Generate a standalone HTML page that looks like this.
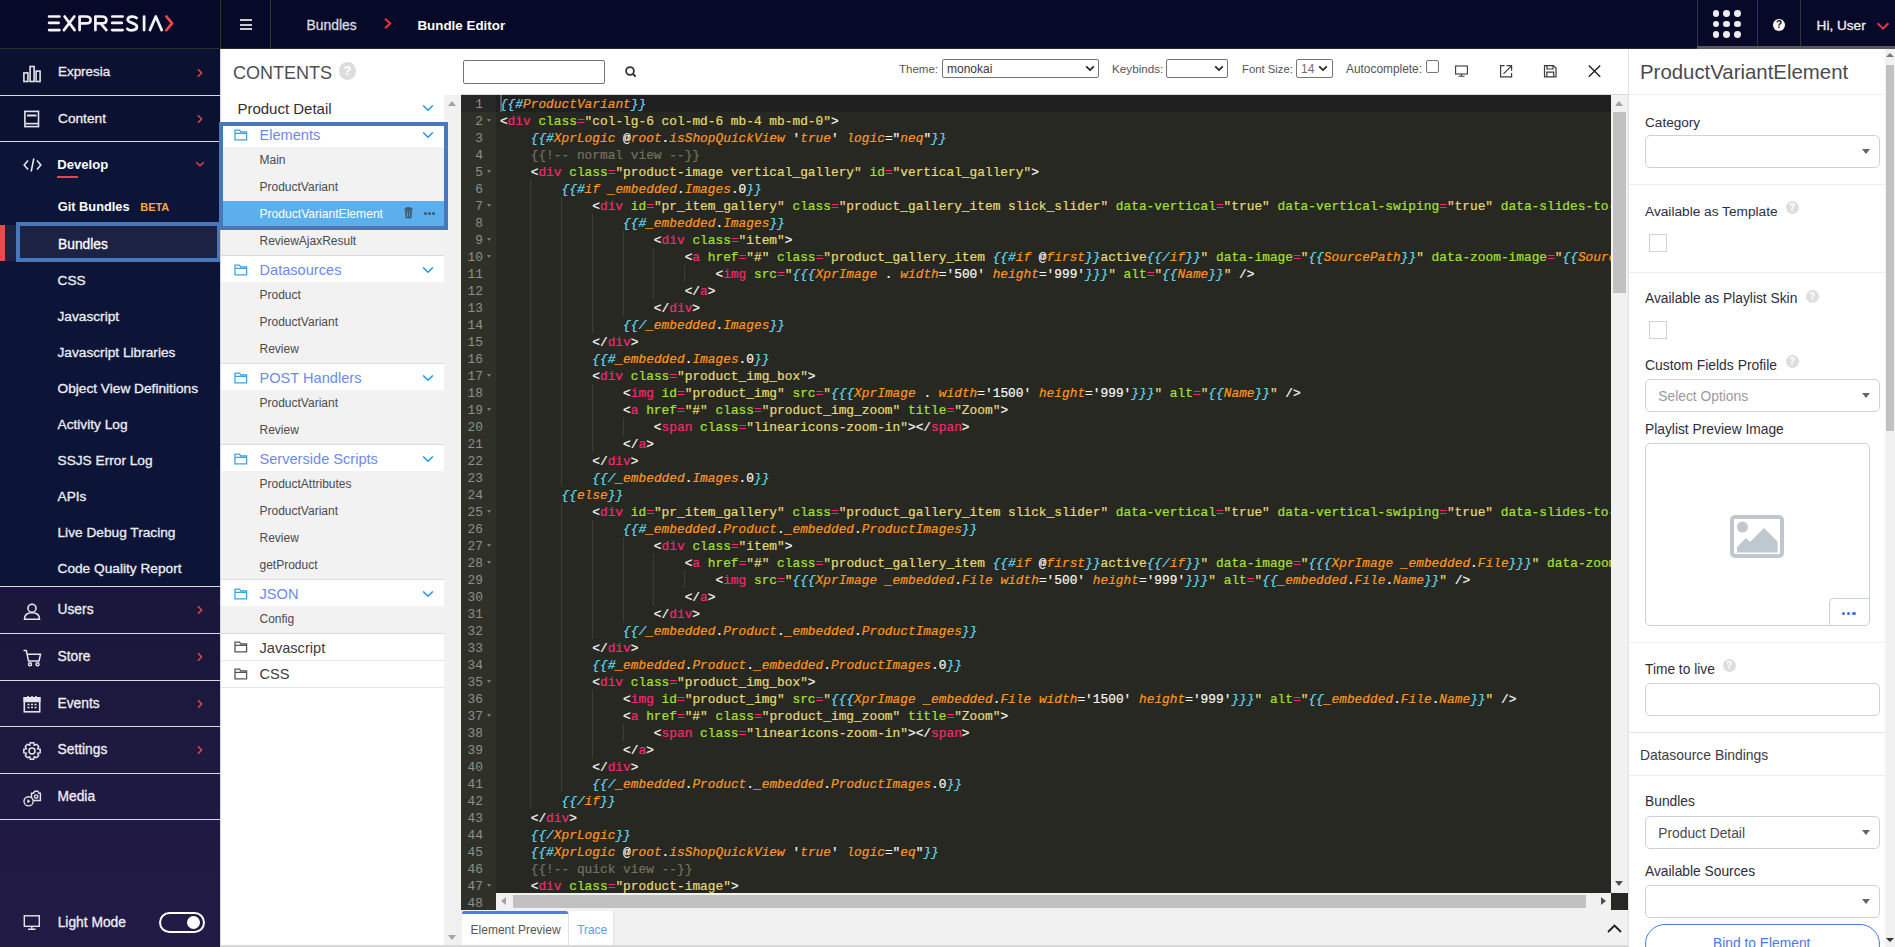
<!DOCTYPE html>
<html><head><meta charset="utf-8">
<style>
*{box-sizing:border-box;margin:0;padding:0}
html,body{width:1895px;height:947px;overflow:hidden;background:#fff;font-family:"Liberation Sans",sans-serif}
.a{position:absolute}
.t{position:absolute;white-space:nowrap;line-height:1}
/* header */
#hdr{left:0;top:0;width:1895px;height:49px;background:#060a28}
.vd{position:absolute;top:0;width:1px;height:48px;background:#34352f}
/* sidebar */
#side{left:0;top:48px;width:220px;height:899px;background:#0b1231;overflow:hidden}
.sd{position:absolute;left:0;width:220px;height:1px;background:#d9d9de}
.st{position:absolute;white-space:nowrap;line-height:1;color:#e9e9ee;font-size:13.8px;-webkit-text-stroke:0.3px currentColor}
.chev{position:absolute;width:6px;height:6px;border-right:1.6px solid #e2474c;border-top:1.6px solid #e2474c;transform:rotate(45deg)}
/* contents */
#cont{left:221px;top:48px;width:223px;height:899px;background:#fff}
.fr{position:absolute;left:0;width:223px;background:#fff}
.ib{position:absolute;left:0;width:223px;background:#f2f2f2}
.it{position:absolute;left:38px;white-space:nowrap;line-height:1;color:#4a4a4a;font-size:12px}
.ft{position:absolute;left:38px;white-space:nowrap;line-height:1;color:#6f8bea;font-size:14.6px}
.hl{position:absolute;left:0;width:223px;height:1px;background:#dedede}
.cchev{position:absolute;width:7px;height:7px;border-right:1.6px solid #1b9be6;border-bottom:1.6px solid #1b9be6;transform:rotate(45deg)}
/* editor */
#ed{left:461px;top:95px;width:1167px;height:815px;background:#272822;overflow:hidden}
#gut{left:0;top:0;width:35px;height:815px;background:#2f3129}
#code{left:35px;top:0;width:1116px;height:798px;overflow:hidden}
.ln{position:absolute;left:0;width:22px;text-align:right;font-family:"Liberation Mono",monospace;font-size:12.83px;line-height:17px;color:#8f908a;height:17px}
.fold{position:absolute;left:26px;width:0;height:0;border-left:2.8px solid transparent;border-right:2.8px solid transparent;border-top:3.6px solid #7a7a7a}
.cl{position:absolute;left:3.9px;height:17px;white-space:pre;font-family:"Liberation Mono",monospace;font-size:12.83px;line-height:17px;color:#f8f8f2}
.cl b{font-weight:normal}
.cl{-webkit-text-stroke:0.2px currentColor}
.cl i{font-style:italic}
.w{color:#f8f8f2}.p{color:#f92672}.g{color:#a6e22e}.y{color:#e6db74}.o{color:#fd971f}.c{color:#66d9ef}.m{color:#75715e}
.ig{position:absolute;width:1px;height:17px;background:#3e3d36}
/* right panel */
#rp{left:1628px;top:48px;width:267px;height:899px;background:#fff;border-left:1px solid #e4e4e4}
.rl{position:absolute;left:17px;white-space:nowrap;line-height:1;color:#2e2e3e;font-size:13.8px}
.rd{position:absolute;left:0;width:257px;height:1px;background:#eceef2}
.sel{position:absolute;left:16px;width:235px;height:33px;border:1px solid #ccd1da;border-radius:5px;background:#fff}
.tri{position:absolute;width:0;height:0;border-left:4.5px solid transparent;border-right:4.5px solid transparent;border-top:5px solid #666}
.help{position:absolute;width:13px;height:13px;border-radius:50%;background:#dcdcdc;color:#fff;font-size:10px;font-weight:bold;line-height:13px;text-align:center}
.cb{position:absolute;left:21px;width:18px;height:18px;border:1px solid #d0d0d0;background:#fff}
</style></head><body>
<div id="hdr" class="a">
<svg class="a" style="left:44px;top:10px" width="136" height="28" viewBox="0 0 136 28">
<g fill="none" stroke="#f4f4f6" stroke-width="2.7" stroke-linecap="round" stroke-linejoin="round">
<path d="M5.1 6.5H15.4M5.1 12.9H14.6M5.1 20.1H15.4"/>
<path d="M20.6 6.5L30.6 20.1M30.3 6.5L19.9 20.1"/>
<path d="M35.6 20.1V6.5H41.6C45 6.5 46.6 8.2 46.6 10.2C46.6 12.2 45 13.4 41.6 13.4H35.6"/>
<path d="M51.4 20.1V6.5H57.4C60.8 6.5 62.4 8.2 62.4 10.2C62.4 12.2 60.8 13.4 57.4 13.4H51.4M56.6 13.4L62.4 20.1"/>
<path d="M68.2 6.5H78.6M68.2 12.9H77.8M68.2 20.1H78.6"/>
<path d="M92.6 8C91 6.3 84.2 5.6 83.7 9.6C83.3 13.1 92.6 12.6 92.9 16.5C93.2 20.9 85.3 21.1 83.3 18.8"/>
<path d="M100.1 6.5V20.1"/>
<path d="M105.9 20.1L111.8 6.5L117.7 20.1"/>
<path d="M122.4 6.5L128.1 13.3L122.4 20.1" stroke="#ef4a4a"/>
</g></svg>
<div class="vd" style="left:220px"></div>
<div class="vd" style="left:270px"></div>
<div class="a" style="left:240.00px;top:19.00px;width:12.00px;height:2.00px;background:#c9c9cf"></div>
<div class="a" style="left:240.00px;top:23.50px;width:12.00px;height:2.00px;background:#c9c9cf"></div>
<div class="a" style="left:240.00px;top:28.00px;width:12.00px;height:2.00px;background:#c9c9cf"></div>
<div class="t" style="left:306.50px;top:15px;font-size:13.90px;line-height:20px;color:#dcdce2;-webkit-text-stroke:0.3px #dcdce2">Bundles</div>
<svg class="a" style="left:382px;top:17px" width="11" height="13" viewBox="0 0 11 13"><path d="M3 1.8L8.2 6.5L3 11.2" fill="none" stroke="#e8363e" stroke-width="2"/></svg>
<div class="t" style="left:417.40px;top:16px;font-size:13.40px;line-height:20px;font-weight:bold;color:#fff">Bundle Editor</div>
<div class="vd" style="left:1697px"></div>
<div class="vd" style="left:1757px"></div>
<div class="vd" style="left:1800px"></div>
<div class="a" style="left:1697.00px;top:46.00px;width:198.00px;height:3.00px;background:#5a5a5e"></div>
<div class="a" style="left:0.00px;top:48.00px;width:1697.00px;height:1.00px;background:#2b2b2a"></div>
<div class="a" style="left:1712.70px;top:10.10px;width:6.80px;height:6.80px;background:#ececec;border-radius:50%"></div>
<div class="a" style="left:1723.30px;top:10.10px;width:6.80px;height:6.80px;background:#ececec;border-radius:50%"></div>
<div class="a" style="left:1733.80px;top:10.10px;width:6.80px;height:6.80px;background:#ececec;border-radius:50%"></div>
<div class="a" style="left:1712.70px;top:20.50px;width:6.80px;height:6.80px;background:#ececec;border-radius:50%"></div>
<div class="a" style="left:1723.30px;top:20.50px;width:6.80px;height:6.80px;background:#ececec;border-radius:50%"></div>
<div class="a" style="left:1733.80px;top:20.50px;width:6.80px;height:6.80px;background:#ececec;border-radius:50%"></div>
<div class="a" style="left:1712.70px;top:30.90px;width:6.80px;height:6.80px;background:#ececec;border-radius:50%"></div>
<div class="a" style="left:1723.30px;top:30.90px;width:6.80px;height:6.80px;background:#ececec;border-radius:50%"></div>
<div class="a" style="left:1733.80px;top:30.90px;width:6.80px;height:6.80px;background:#ececec;border-radius:50%"></div>
<div class="a" style="left:1773.00px;top:19.00px;width:12.00px;height:12.00px;background:#fff;border-radius:50%;color:#060a28;font-size:10px;font-weight:bold;line-height:12px;text-align:center">?</div>
<div class="t" style="left:1816.60px;top:16px;font-size:13.60px;line-height:20px;color:#f0f0f4;-webkit-text-stroke:0.3px #f0f0f4">Hi, User</div>
<svg class="a" style="left:1876px;top:21px" width="14" height="10" viewBox="0 0 14 10"><path d="M1.6 2.2L7 7.6L12.4 2.2" fill="none" stroke="#e8363e" stroke-width="2"/></svg>
</div>
<div class="a" style="left:0.00px;top:49.00px;width:220.00px;height:93.00px;background:#0b1131"></div>
<div class="a" style="left:0.00px;top:142.00px;width:220.00px;height:445.00px;background:#0c1538"></div>
<div class="a" style="left:0.00px;top:587.00px;width:220.00px;height:360.00px;background:linear-gradient(#19173a,#221b46)"></div>
<div class="sd" style="top:95px"></div>
<div class="sd" style="top:141px"></div>
<div class="sd" style="top:586px"></div>
<div class="sd" style="top:633px"></div>
<div class="sd" style="top:680px"></div>
<div class="sd" style="top:726px"></div>
<div class="sd" style="top:773px"></div>
<div class="sd" style="top:819px"></div>
<svg class="a" style="left:22.0px;top:64.0px" width="20" height="20" viewBox="0 0 20 20"><g fill="none" stroke="#e4e4ea" stroke-width="1.60"><rect x="1.9" y="8.9" width="4" height="8.6"/><rect x="8.1" y="2.5" width="4" height="15"/><rect x="14.1" y="7.1" width="4" height="10.4"/></g></svg>
<svg class="a" style="left:22.0px;top:109.0px" width="20" height="20" viewBox="0 0 20 20"><g fill="none" stroke="#e4e4ea" stroke-width="1.60"><rect x="2.9" y="2.4" width="13.6" height="15.2"/><path d="M5 6.5H14.5" stroke-width="2"/><path d="M3.5 14.6H16"/></g></svg>
<svg class="a" style="left:22.0px;top:156.0px" width="20" height="18" viewBox="0 0 20 18"><g fill="none" stroke="#e4e4ea" stroke-width="1.60"><path d="M6 4.5L2.2 9L6 13.5M15 4.5L18.8 9L15 13.5M11.8 2.5L9.2 15.5"/></g></svg>
<div class="st" style="left:58.00px;top:62px;font-size:13.40px;line-height:20px;color:#ececf0">Expresia</div>
<svg class="a" style="left:195.5px;top:67.5px" width="8" height="10" viewBox="0 0 8 10"><path d="M2 1.2L5.6 5L2 8.8" fill="none" stroke="#e2474c" stroke-width="1.5"/></svg>
<div class="st" style="left:58.00px;top:109px;font-size:13.70px;line-height:20px;color:#ececf0">Content</div>
<svg class="a" style="left:195.5px;top:114.0px" width="8" height="10" viewBox="0 0 8 10"><path d="M2 1.2L5.6 5L2 8.8" fill="none" stroke="#e2474c" stroke-width="1.5"/></svg>
<div class="st" style="left:57.30px;top:155px;font-size:13.10px;line-height:20px;font-weight:bold;color:#fff;-webkit-text-stroke:0">Develop</div>
<div class="a" style="left:57.00px;top:175.50px;width:21.00px;height:2.00px;background:#e2474c"></div>
<svg class="a" style="left:195px;top:160px" width="10" height="8" viewBox="0 0 10 8"><path d="M1.2 2.2L5 5.8L8.8 2.2" fill="none" stroke="#e2474c" stroke-width="1.5"/></svg>
<div class="st" style="left:57.80px;top:197px;font-size:12.80px;line-height:20px;font-weight:bold;color:#fff;-webkit-text-stroke:0">Git Bundles</div>
<div class="st" style="left:140.20px;top:197px;font-size:11.00px;line-height:20px;font-weight:bold;color:#f6aa3c;-webkit-text-stroke:0">BETA</div>
<div class="a" style="left:0.00px;top:225.00px;width:220.00px;height:36.00px;background:#1b2244"></div>
<div class="a" style="left:0.00px;top:225.00px;width:5.00px;height:36.00px;background:#e84a50"></div>
<div class="a" style="left:16.00px;top:222.00px;width:205.00px;height:40.00px;border:4px solid #4a77b9"></div>
<div class="st" style="left:58.00px;top:235px;font-size:13.80px;line-height:20px;color:#fff">Bundles</div>
<div class="st" style="left:57.50px;top:271px;font-size:13.70px;line-height:20px;color:#eeeef2">CSS</div>
<div class="st" style="left:57.50px;top:307px;font-size:13.70px;line-height:20px;color:#eeeef2">Javascript</div>
<div class="st" style="left:57.50px;top:343px;font-size:13.70px;line-height:20px;color:#eeeef2">Javascript Libraries</div>
<div class="st" style="left:57.50px;top:379px;font-size:13.70px;line-height:20px;color:#eeeef2">Object View Definitions</div>
<div class="st" style="left:57.50px;top:415px;font-size:13.70px;line-height:20px;color:#eeeef2">Activity Log</div>
<div class="st" style="left:57.50px;top:451px;font-size:13.70px;line-height:20px;color:#eeeef2">SSJS Error Log</div>
<div class="st" style="left:57.50px;top:487px;font-size:13.70px;line-height:20px;color:#eeeef2">APIs</div>
<div class="st" style="left:57.50px;top:523px;font-size:13.70px;line-height:20px;color:#eeeef2">Live Debug Tracing</div>
<div class="st" style="left:57.50px;top:559px;font-size:13.70px;line-height:20px;color:#eeeef2">Code Quality Report</div>
<div class="st" style="left:57.50px;top:600px;font-size:13.80px;line-height:20px;color:#eeeef2">Users</div>
<svg class="a" style="left:195.5px;top:604.8px" width="8" height="10" viewBox="0 0 8 10"><path d="M2 1.2L5.6 5L2 8.8" fill="none" stroke="#e2474c" stroke-width="1.5"/></svg>
<div class="st" style="left:57.50px;top:647px;font-size:13.80px;line-height:20px;color:#eeeef2">Store</div>
<svg class="a" style="left:195.5px;top:651.5px" width="8" height="10" viewBox="0 0 8 10"><path d="M2 1.2L5.6 5L2 8.8" fill="none" stroke="#e2474c" stroke-width="1.5"/></svg>
<div class="st" style="left:57.50px;top:694px;font-size:13.80px;line-height:20px;color:#eeeef2">Events</div>
<svg class="a" style="left:195.5px;top:698.5px" width="8" height="10" viewBox="0 0 8 10"><path d="M2 1.2L5.6 5L2 8.8" fill="none" stroke="#e2474c" stroke-width="1.5"/></svg>
<div class="st" style="left:57.50px;top:740px;font-size:13.80px;line-height:20px;color:#eeeef2">Settings</div>
<svg class="a" style="left:195.5px;top:744.5px" width="8" height="10" viewBox="0 0 8 10"><path d="M2 1.2L5.6 5L2 8.8" fill="none" stroke="#e2474c" stroke-width="1.5"/></svg>
<div class="st" style="left:57.50px;top:787px;font-size:13.80px;line-height:20px;color:#eeeef2">Media</div>
<svg class="a" style="left:22.0px;top:602.0px" width="20" height="20" viewBox="0 0 20 20"><g fill="none" stroke="#e4e4ea" stroke-width="1.60"><circle cx="10" cy="6.2" r="4"/><path d="M2.5 17.2C2.5 12.5 6 10.8 10 10.8C14 10.8 17.5 12.5 17.5 17.2Z"/></g></svg>
<svg class="a" style="left:22.0px;top:648.0px" width="20" height="20" viewBox="0 0 20 20"><g fill="none" stroke="#e4e4ea" stroke-width="1.50"><path d="M1.5 2.5H4.3L6.5 13H17L18.5 6.2H5.2"/><circle cx="8" cy="16.3" r="1.5"/><circle cx="15.5" cy="16.3" r="1.5"/></g></svg>
<svg class="a" style="left:22.0px;top:694.0px" width="20" height="20" viewBox="0 0 20 20"><g fill="none" stroke="#e4e4ea" stroke-width="1.60"><rect x="2.3" y="3.8" width="15.4" height="14" /><rect x="2.3" y="3.8" width="15.4" height="3.6" fill="#e4e4ea"/><path d="M6 2V4M10 2V4M14 2V4"/><path d="M5.5 10.5h2M9 10.5h2M12.5 10.5h2M5.5 13.5h2M9 13.5h2M12.5 13.5h2" stroke-width="1.5"/></g></svg>
<svg class="a" style="left:22.0px;top:741.0px" width="20" height="20" viewBox="0 0 20 20"><g fill="none" stroke="#e4e4ea" stroke-width="1.50"><circle cx="10" cy="10" r="3"/><path d="M8.3 1.8H11.7L12.3 4.3L14.6 3.3L16.7 5.4L15.7 7.7L18.2 8.3V11.7L15.7 12.3L16.7 14.6L14.6 16.7L12.3 15.7L11.7 18.2H8.3L7.7 15.7L5.4 16.7L3.3 14.6L4.3 12.3L1.8 11.7V8.3L4.3 7.7L3.3 5.4L5.4 3.3L7.7 4.3Z"/></g></svg>
<svg class="a" style="left:22.0px;top:788.0px" width="20" height="20" viewBox="0 0 20 20"><g fill="none" stroke="#e4e4ea" stroke-width="1.40"><circle cx="6.6" cy="13.3" r="4.6"/><path d="M5.3 11.3V15.3L8.5 13.3Z" fill="#e4e4ea" stroke="none"/><path d="M9.5 9.5V5.2H11.5L12.8 3.2H15.8L17 5.2H18.4V12.5H11.3"/><circle cx="14.2" cy="8.6" r="1.7"/></g></svg>
<div class="st" style="left:57.70px;top:913px;font-size:13.80px;line-height:20px;color:#eeeef2">Light Mode</div>
<svg class="a" style="left:22.0px;top:913.0px" width="20" height="18" viewBox="0 0 20 18"><g fill="none" stroke="#e4e4ea" stroke-width="1.40"><rect x="2.3" y="2.8" width="15" height="10.5"/><path d="M9.8 13.3V16M6 16.2H13.6"/></g></svg>
<div class="a" style="left:159.00px;top:912.00px;width:46.00px;height:21.00px;border:2px solid #fff;border-radius:11px"></div>
<div class="a" style="left:187.00px;top:916.00px;width:13.00px;height:13.00px;background:#fff;border-radius:50%"></div>
<div class="a" style="left:221.00px;top:49.00px;width:223.00px;height:898.00px;background:#fff"></div>
<div class="a" style="left:220.00px;top:49.00px;width:1.00px;height:898.00px;background:#d6d6d6"></div>
<div class="t" style="left:233.00px;top:63px;font-size:18.00px;line-height:20px;color:#4f4f55">CONTENTS</div>
<div class="a" style="left:338.80px;top:62.40px;width:17.20px;height:17.20px;background:#dddddd;border-radius:50%;color:#fff;font-size:13px;font-weight:bold;line-height:17.2px;text-align:center">?</div>
<div class="a" style="left:444.00px;top:95.00px;width:17.00px;height:852.00px;background:#f1f1f1"></div>
<div class="tri" style="left:448px;top:101px;border-top:0;border-bottom:5px solid #a3a3a3"></div>
<div class="tri" style="left:448px;top:935px;border-top:5px solid #a3a3a3"></div>
<div class="t" style="left:237.40px;top:99px;font-size:15.00px;line-height:20px;color:#2f2f35">Product Detail</div>
<svg class="a" style="left:422.0px;top:104.0px" width="12" height="8" viewBox="0 0 12 8"><path d="M1.2 1.5L6 6.2L10.8 1.5" fill="none" stroke="#1b9be6" stroke-width="1.6"/></svg>
<div class="a" style="left:221.00px;top:126.00px;width:223.00px;height:21.00px;background:#fff"></div>
<svg class="a" style="left:234.0px;top:128.5px" width="14" height="12" viewBox="0 0 14 12"><path d="M1 1.2H5.6L6.6 2.8H12.6V10.8H1Z M1 4.4H12.6" fill="none" stroke="#3ea2e2" stroke-width="1.3"/></svg>
<div class="t" style="left:259.50px;top:125px;font-size:14.60px;line-height:20px;color:#6d8aea">Elements</div>
<svg class="a" style="left:422.0px;top:131.0px" width="12" height="8" viewBox="0 0 12 8"><path d="M1.2 1.5L6 6.2L10.8 1.5" fill="none" stroke="#1b9be6" stroke-width="1.6"/></svg>
<div class="a" style="left:221.00px;top:147.00px;width:223.00px;height:108.00px;background:#f2f2f2"></div>
<div class="t" style="left:259.50px;top:150px;font-size:12.00px;line-height:20px;color:#4a4a4e">Main</div>
<div class="t" style="left:259.50px;top:177px;font-size:12.00px;line-height:20px;color:#4a4a4e">ProductVariant</div>
<div class="a" style="left:221.00px;top:201.00px;width:223.00px;height:26.00px;background:#5aafec"></div>
<div class="t" style="left:259.50px;top:204px;font-size:12.10px;line-height:20px;color:#fff">ProductVariantElement</div>
<svg class="a" style="left:403px;top:207px" width="11" height="12" viewBox="0 0 11 12"><path d="M1 2.2H10M3.8 2.2V1H7.2V2.2" stroke="#3d5568" stroke-width="1.3" fill="none"/><path d="M2 3.3H9L8.4 11.3H2.6Z" fill="#3d5568"/><path d="M4.3 4.8V10M6.7 4.8V10" stroke="#5aafec" stroke-width="0.9"/></svg>
<div class="a" style="left:424.20px;top:211.50px;width:3.20px;height:3.20px;background:#3d5568;border-radius:50%"></div>
<div class="a" style="left:428.20px;top:211.50px;width:3.20px;height:3.20px;background:#3d5568;border-radius:50%"></div>
<div class="a" style="left:432.20px;top:211.50px;width:3.20px;height:3.20px;background:#3d5568;border-radius:50%"></div>
<div class="t" style="left:259.50px;top:231px;font-size:12.00px;line-height:20px;color:#4a4a4e">ReviewAjaxResult</div>
<div class="a" style="left:221.00px;top:255.00px;width:223.00px;height:1.00px;background:#dcdcdc"></div>
<div class="a" style="left:221.00px;top:256.00px;width:223.00px;height:26.00px;background:#fff"></div>
<svg class="a" style="left:234.0px;top:263.5px" width="14" height="12" viewBox="0 0 14 12"><path d="M1 1.2H5.6L6.6 2.8H12.6V10.8H1Z M1 4.4H12.6" fill="none" stroke="#3ea2e2" stroke-width="1.3"/></svg>
<div class="t" style="left:259.50px;top:260px;font-size:14.60px;line-height:20px;color:#6d8aea">Datasources</div>
<svg class="a" style="left:422.0px;top:266.0px" width="12" height="8" viewBox="0 0 12 8"><path d="M1.2 1.5L6 6.2L10.8 1.5" fill="none" stroke="#1b9be6" stroke-width="1.6"/></svg>
<div class="a" style="left:221.00px;top:282.00px;width:223.00px;height:81.00px;background:#f2f2f2"></div>
<div class="t" style="left:259.50px;top:285px;font-size:12.00px;line-height:20px;color:#4a4a4e">Product</div>
<div class="t" style="left:259.50px;top:312px;font-size:12.00px;line-height:20px;color:#4a4a4e">ProductVariant</div>
<div class="t" style="left:259.50px;top:339px;font-size:12.00px;line-height:20px;color:#4a4a4e">Review</div>
<div class="a" style="left:221.00px;top:363.00px;width:223.00px;height:1.00px;background:#dcdcdc"></div>
<div class="a" style="left:221.00px;top:364.00px;width:223.00px;height:26.00px;background:#fff"></div>
<svg class="a" style="left:234.0px;top:371.5px" width="14" height="12" viewBox="0 0 14 12"><path d="M1 1.2H5.6L6.6 2.8H12.6V10.8H1Z M1 4.4H12.6" fill="none" stroke="#3ea2e2" stroke-width="1.3"/></svg>
<div class="t" style="left:259.50px;top:368px;font-size:14.60px;line-height:20px;color:#6d8aea">POST Handlers</div>
<svg class="a" style="left:422.0px;top:374.0px" width="12" height="8" viewBox="0 0 12 8"><path d="M1.2 1.5L6 6.2L10.8 1.5" fill="none" stroke="#1b9be6" stroke-width="1.6"/></svg>
<div class="a" style="left:221.00px;top:390.00px;width:223.00px;height:54.00px;background:#f2f2f2"></div>
<div class="t" style="left:259.50px;top:393px;font-size:12.00px;line-height:20px;color:#4a4a4e">ProductVariant</div>
<div class="t" style="left:259.50px;top:420px;font-size:12.00px;line-height:20px;color:#4a4a4e">Review</div>
<div class="a" style="left:221.00px;top:444.00px;width:223.00px;height:1.00px;background:#dcdcdc"></div>
<div class="a" style="left:221.00px;top:445.00px;width:223.00px;height:26.00px;background:#fff"></div>
<svg class="a" style="left:234.0px;top:452.5px" width="14" height="12" viewBox="0 0 14 12"><path d="M1 1.2H5.6L6.6 2.8H12.6V10.8H1Z M1 4.4H12.6" fill="none" stroke="#3ea2e2" stroke-width="1.3"/></svg>
<div class="t" style="left:259.50px;top:449px;font-size:14.60px;line-height:20px;color:#6d8aea">Serverside Scripts</div>
<svg class="a" style="left:422.0px;top:455.0px" width="12" height="8" viewBox="0 0 12 8"><path d="M1.2 1.5L6 6.2L10.8 1.5" fill="none" stroke="#1b9be6" stroke-width="1.6"/></svg>
<div class="a" style="left:221.00px;top:471.00px;width:223.00px;height:108.00px;background:#f2f2f2"></div>
<div class="t" style="left:259.50px;top:474px;font-size:12.00px;line-height:20px;color:#4a4a4e">ProductAttributes</div>
<div class="t" style="left:259.50px;top:501px;font-size:12.00px;line-height:20px;color:#4a4a4e">ProductVariant</div>
<div class="t" style="left:259.50px;top:528px;font-size:12.00px;line-height:20px;color:#4a4a4e">Review</div>
<div class="t" style="left:259.50px;top:555px;font-size:12.00px;line-height:20px;color:#4a4a4e">getProduct</div>
<div class="a" style="left:221.00px;top:579.00px;width:223.00px;height:1.00px;background:#dcdcdc"></div>
<div class="a" style="left:221.00px;top:580.00px;width:223.00px;height:26.00px;background:#fff"></div>
<svg class="a" style="left:234.0px;top:587.5px" width="14" height="12" viewBox="0 0 14 12"><path d="M1 1.2H5.6L6.6 2.8H12.6V10.8H1Z M1 4.4H12.6" fill="none" stroke="#3ea2e2" stroke-width="1.3"/></svg>
<div class="t" style="left:259.50px;top:584px;font-size:14.60px;line-height:20px;color:#6d8aea">JSON</div>
<svg class="a" style="left:422.0px;top:590.0px" width="12" height="8" viewBox="0 0 12 8"><path d="M1.2 1.5L6 6.2L10.8 1.5" fill="none" stroke="#1b9be6" stroke-width="1.6"/></svg>
<div class="a" style="left:221.00px;top:606.00px;width:223.00px;height:27.00px;background:#f2f2f2"></div>
<div class="t" style="left:259.50px;top:609px;font-size:12.00px;line-height:20px;color:#4a4a4e">Config</div>
<div class="a" style="left:221.00px;top:633.00px;width:223.00px;height:1.00px;background:#dcdcdc"></div>
<svg class="a" style="left:234.0px;top:641.3px" width="14" height="12" viewBox="0 0 14 12"><path d="M1 1.2H5.6L6.6 2.8H12.6V10.8H1Z M1 4.4H12.6" fill="none" stroke="#555" stroke-width="1.3"/></svg>
<div class="t" style="left:259.50px;top:638px;font-size:14.60px;line-height:20px;color:#3c3c40">Javascript</div>
<div class="a" style="left:221.00px;top:660.00px;width:223.00px;height:1.00px;background:#e6e6e6"></div>
<svg class="a" style="left:234.0px;top:667.9px" width="14" height="12" viewBox="0 0 14 12"><path d="M1 1.2H5.6L6.6 2.8H12.6V10.8H1Z M1 4.4H12.6" fill="none" stroke="#555" stroke-width="1.3"/></svg>
<div class="t" style="left:259.50px;top:664px;font-size:14.60px;line-height:20px;color:#3c3c40">CSS</div>
<div class="a" style="left:221.00px;top:687.00px;width:223.00px;height:1.00px;background:#e6e6e6"></div>
<div class="a" style="left:218.60px;top:122.30px;width:229.40px;height:108.20px;border:4px solid #4a77b9"></div>
<div class="a" style="left:461.00px;top:49.00px;width:1167.00px;height:46.00px;background:#fff"></div>
<div class="a" style="left:463.00px;top:60.00px;width:142.00px;height:24.00px;border:1px solid #767676;border-radius:2px"></div>
<svg class="a" style="left:624px;top:65px" width="14" height="14" viewBox="0 0 14 14"><circle cx="6" cy="6" r="3.9" fill="none" stroke="#333" stroke-width="1.8"/><path d="M8.8 8.8L11.6 11.6" stroke="#333" stroke-width="2"/></svg>
<div class="t" style="left:899.00px;top:59px;font-size:11.50px;line-height:20px;color:#555">Theme:</div>
<div class="a" style="left:942.00px;top:59.00px;width:157.00px;height:19.00px;border:1px solid #767676;border-radius:2px;background:#fff"></div><svg class="a" style="left:1084.5px;top:65.3px" width="10" height="7" viewBox="0 0 10 7"><path d="M1.2 1.3L5 5.1L8.8 1.3" fill="none" stroke="#222" stroke-width="1.7"/></svg><div class="t" style="left:947.00px;top:59px;font-size:12.00px;line-height:20px;color:#3a3a3a">monokai</div>
<div class="t" style="left:1112.00px;top:59px;font-size:11.70px;line-height:20px;color:#555">Keybinds:</div>
<div class="a" style="left:1166.00px;top:59.00px;width:62.00px;height:19.00px;border:1px solid #767676;border-radius:2px;background:#fff"></div><svg class="a" style="left:1213.5px;top:65.3px" width="10" height="7" viewBox="0 0 10 7"><path d="M1.2 1.3L5 5.1L8.8 1.3" fill="none" stroke="#222" stroke-width="1.7"/></svg>
<div class="t" style="left:1242.00px;top:59px;font-size:11.30px;line-height:20px;color:#555">Font Size:</div>
<div class="a" style="left:1296.00px;top:59.00px;width:36.50px;height:19.00px;border:1px solid #767676;border-radius:2px;background:#fff"></div><svg class="a" style="left:1318.0px;top:65.3px" width="10" height="7" viewBox="0 0 10 7"><path d="M1.2 1.3L5 5.1L8.8 1.3" fill="none" stroke="#222" stroke-width="1.7"/></svg><div class="t" style="left:1301.00px;top:59px;font-size:12.00px;line-height:20px;color:#707070">14</div>
<div class="t" style="left:1346.00px;top:59px;font-size:11.90px;line-height:20px;color:#555">Autocomplete:</div>
<div class="a" style="left:1426.40px;top:60.20px;width:12.60px;height:12.60px;border:1px solid #767676;border-radius:2px"></div>
<svg class="a" style="left:1453px;top:63px" width="17" height="15" viewBox="0 0 17 15"><rect x="2.6" y="3" width="11.8" height="8" fill="none" stroke="#3a3a3a" stroke-width="1.1"/><path d="M8.5 11V13M5.5 13.2H11.5" stroke="#3a3a3a" stroke-width="1.1"/></svg>
<svg class="a" style="left:1499px;top:64px" width="15" height="15" viewBox="0 0 15 15"><path d="M5.5 1.7H1.6V12.8H12.6V9" fill="none" stroke="#3a3a3a" stroke-width="1.2"/><path d="M4.5 9.8L12.2 2.1M7.6 1.7H12.6V6.7" fill="none" stroke="#3a3a3a" stroke-width="1.2"/></svg>
<svg class="a" style="left:1543px;top:64px" width="15" height="15" viewBox="0 0 15 15"><path d="M1.5 1.6H10.5L13 4.1V12.8H1.5Z" fill="none" stroke="#3a3a3a" stroke-width="1.2"/><path d="M4 1.6V5H10V1.6M3.8 12.8V8.2H10.7V12.8" fill="none" stroke="#3a3a3a" stroke-width="1.2"/></svg>
<svg class="a" style="left:1587px;top:64px" width="15" height="15" viewBox="0 0 15 15"><path d="M1.8 1.6L13.2 12.8M13.2 1.6L1.8 12.8" fill="none" stroke="#222" stroke-width="1.4"/></svg>
<div class="a" style="left:461.00px;top:94.00px;width:1167.00px;height:1.00px;background:#d9d9d9"></div>
<div id="ed" class="a">
<div id="gut" class="a"></div>
<div class="a" style="left:0.00px;top:0.00px;width:35.00px;height:17.00px;background:#272727"></div>
<div class="a" style="left:35.00px;top:0.00px;width:1115.00px;height:17.00px;background:#202020"></div>
<div class="ln" style="top:1px">1</div>
<div class="ln" style="top:18px">2</div>
<div class="fold" style="top:24px"></div>
<div class="ln" style="top:35px">3</div>
<div class="ln" style="top:52px">4</div>
<div class="ln" style="top:69px">5</div>
<div class="fold" style="top:75px"></div>
<div class="ln" style="top:86px">6</div>
<div class="ln" style="top:103px">7</div>
<div class="fold" style="top:109px"></div>
<div class="ln" style="top:120px">8</div>
<div class="ln" style="top:137px">9</div>
<div class="fold" style="top:143px"></div>
<div class="ln" style="top:154px">10</div>
<div class="fold" style="top:160px"></div>
<div class="ln" style="top:171px">11</div>
<div class="ln" style="top:188px">12</div>
<div class="ln" style="top:205px">13</div>
<div class="ln" style="top:222px">14</div>
<div class="ln" style="top:239px">15</div>
<div class="ln" style="top:256px">16</div>
<div class="ln" style="top:273px">17</div>
<div class="fold" style="top:279px"></div>
<div class="ln" style="top:290px">18</div>
<div class="ln" style="top:307px">19</div>
<div class="fold" style="top:313px"></div>
<div class="ln" style="top:324px">20</div>
<div class="ln" style="top:341px">21</div>
<div class="ln" style="top:358px">22</div>
<div class="ln" style="top:375px">23</div>
<div class="ln" style="top:392px">24</div>
<div class="ln" style="top:409px">25</div>
<div class="fold" style="top:415px"></div>
<div class="ln" style="top:426px">26</div>
<div class="ln" style="top:443px">27</div>
<div class="fold" style="top:449px"></div>
<div class="ln" style="top:460px">28</div>
<div class="fold" style="top:466px"></div>
<div class="ln" style="top:477px">29</div>
<div class="ln" style="top:494px">30</div>
<div class="ln" style="top:511px">31</div>
<div class="ln" style="top:528px">32</div>
<div class="ln" style="top:545px">33</div>
<div class="ln" style="top:562px">34</div>
<div class="ln" style="top:579px">35</div>
<div class="fold" style="top:585px"></div>
<div class="ln" style="top:596px">36</div>
<div class="ln" style="top:613px">37</div>
<div class="fold" style="top:619px"></div>
<div class="ln" style="top:630px">38</div>
<div class="ln" style="top:647px">39</div>
<div class="ln" style="top:664px">40</div>
<div class="ln" style="top:681px">41</div>
<div class="ln" style="top:698px">42</div>
<div class="ln" style="top:715px">43</div>
<div class="ln" style="top:732px">44</div>
<div class="ln" style="top:749px">45</div>
<div class="ln" style="top:766px">46</div>
<div class="ln" style="top:783px">47</div>
<div class="fold" style="top:789px"></div>
<div class="ln" style="top:800px">48</div>
<div id="code" class="a">
<div class="cl" style="top:1px"><i class="c">{{#</i><i class="o">ProductVariant</i><i class="c">}}</i></div>
<div class="cl" style="top:18px"><b class="w">&lt;</b><b class="p">div</b> <b class="g">class</b><b class="p">=</b><b class="y">"col-lg-6 col-md-6 mb-4 mb-md-0"</b><b class="w">&gt;</b></div>
<div class="cl" style="top:35px">    <i class="c">{{#</i><i class="o">XprLogic</i><b class="w"> @</b><i class="o">root</i><b class="w">.</b><i class="o">isShopQuickView</i><b class="w"> '</b><i class="o">true</i><b class="w">' </b><i class="o">logic</i><b class="w">="</b><i class="o">neq</i><b class="w">"</b><i class="c">}}</i></div>
<div class="cl" style="top:52px">    <b class="m">{{!-- normal view --}}</b></div>
<div class="cl" style="top:69px"><b class="w">    &lt;</b><b class="p">div</b> <b class="g">class</b><b class="p">=</b><b class="y">"product-image vertical_gallery"</b> <b class="g">id</b><b class="p">=</b><b class="y">"vertical_gallery"</b><b class="w">&gt;</b></div>
<div class="ig" style="left:34.10px;top:85px"></div>
<div class="cl" style="top:86px">        <i class="c">{{#</i><i class="o">if</i> <i class="o">_embedded</i><b class="w">.</b><i class="o">Images</i><b class="w">.0</b><i class="c">}}</i></div>
<div class="ig" style="left:34.10px;top:102px"></div>
<div class="ig" style="left:64.90px;top:102px"></div>
<div class="cl" style="top:103px"><b class="w">            &lt;</b><b class="p">div</b> <b class="g">id</b><b class="p">=</b><b class="y">"pr_item_gallery"</b> <b class="g">class</b><b class="p">=</b><b class="y">"product_gallery_item slick_slider"</b> <b class="g">data-vertical</b><b class="p">=</b><b class="y">"true"</b> <b class="g">data-vertical-swiping</b><b class="p">=</b><b class="y">"true"</b> <b class="g">data-slides-to-show</b><b class="p">=</b><b class="y">"4"</b> <b class="g">data-slides-to-scroll</b><b class="p">=</b><b class="y">"1"</b> <b class="g">data-infinite</b><b class="p">=</b><b class="y">"false"</b><b class="w">&gt;</b></div>
<div class="ig" style="left:34.10px;top:119px"></div>
<div class="ig" style="left:64.90px;top:119px"></div>
<div class="ig" style="left:95.70px;top:119px"></div>
<div class="cl" style="top:120px">                <i class="c">{{#</i><i class="o">_embedded</i><b class="w">.</b><i class="o">Images</i><i class="c">}}</i></div>
<div class="ig" style="left:34.10px;top:136px"></div>
<div class="ig" style="left:64.90px;top:136px"></div>
<div class="ig" style="left:95.70px;top:136px"></div>
<div class="ig" style="left:126.50px;top:136px"></div>
<div class="cl" style="top:137px"><b class="w">                    &lt;</b><b class="p">div</b> <b class="g">class</b><b class="p">=</b><b class="y">"item"</b><b class="w">&gt;</b></div>
<div class="ig" style="left:34.10px;top:153px"></div>
<div class="ig" style="left:64.90px;top:153px"></div>
<div class="ig" style="left:95.70px;top:153px"></div>
<div class="ig" style="left:126.50px;top:153px"></div>
<div class="ig" style="left:157.30px;top:153px"></div>
<div class="cl" style="top:154px"><b class="w">                        &lt;</b><b class="p">a</b> <b class="g">href</b><b class="p">=</b><b class="y">"#"</b> <b class="g">class</b><b class="p">=</b><b class="y">"product_gallery_item </b><i class="c">{{#</i><i class="o">if</i><b class="w"> @</b><i class="o">first</i><i class="c">}}</i><b class="y">active</b><i class="c">{{/</i><i class="o">if</i><i class="c">}}</i><b class="y">"</b> <b class="g">data-image</b><b class="p">=</b><b class="y">"</b><i class="c">{{</i><i class="o">SourcePath</i><i class="c">}}</i><b class="y">"</b> <b class="g">data-zoom-image</b><b class="p">=</b><b class="y">"</b><i class="c">{{</i><i class="o">SourcePath</i><i class="c">}}</i><b class="y">"</b><b class="w">&gt;</b></div>
<div class="ig" style="left:34.10px;top:170px"></div>
<div class="ig" style="left:64.90px;top:170px"></div>
<div class="ig" style="left:95.70px;top:170px"></div>
<div class="ig" style="left:126.50px;top:170px"></div>
<div class="ig" style="left:157.30px;top:170px"></div>
<div class="ig" style="left:188.10px;top:170px"></div>
<div class="cl" style="top:171px"><b class="w">                            &lt;</b><b class="p">img</b> <b class="g">src</b><b class="p">=</b><b class="y">"</b><i class="c">{{{</i><i class="o">XprImage</i><b class="w"> . </b><i class="o">width</i><b class="w">='500' </b><i class="o">height</i><b class="w">='999'</b><i class="c">}}}</i><b class="y">"</b> <b class="g">alt</b><b class="p">=</b><b class="y">"</b><i class="c">{{</i><i class="o">Name</i><i class="c">}}</i><b class="y">"</b><b class="w"> /&gt;</b></div>
<div class="ig" style="left:34.10px;top:187px"></div>
<div class="ig" style="left:64.90px;top:187px"></div>
<div class="ig" style="left:95.70px;top:187px"></div>
<div class="ig" style="left:126.50px;top:187px"></div>
<div class="ig" style="left:157.30px;top:187px"></div>
<div class="cl" style="top:188px"><b class="w">                        &lt;/</b><b class="p">a</b><b class="w">&gt;</b></div>
<div class="ig" style="left:34.10px;top:204px"></div>
<div class="ig" style="left:64.90px;top:204px"></div>
<div class="ig" style="left:95.70px;top:204px"></div>
<div class="ig" style="left:126.50px;top:204px"></div>
<div class="cl" style="top:205px"><b class="w">                    &lt;/</b><b class="p">div</b><b class="w">&gt;</b></div>
<div class="ig" style="left:34.10px;top:221px"></div>
<div class="ig" style="left:64.90px;top:221px"></div>
<div class="ig" style="left:95.70px;top:221px"></div>
<div class="cl" style="top:222px">                <i class="c">{{/</i><i class="o">_embedded</i><b class="w">.</b><i class="o">Images</i><i class="c">}}</i></div>
<div class="ig" style="left:34.10px;top:238px"></div>
<div class="ig" style="left:64.90px;top:238px"></div>
<div class="cl" style="top:239px"><b class="w">            &lt;/</b><b class="p">div</b><b class="w">&gt;</b></div>
<div class="ig" style="left:34.10px;top:255px"></div>
<div class="ig" style="left:64.90px;top:255px"></div>
<div class="cl" style="top:256px">            <i class="c">{{#</i><i class="o">_embedded</i><b class="w">.</b><i class="o">Images</i><b class="w">.0</b><i class="c">}}</i></div>
<div class="ig" style="left:34.10px;top:272px"></div>
<div class="ig" style="left:64.90px;top:272px"></div>
<div class="cl" style="top:273px"><b class="w">            &lt;</b><b class="p">div</b> <b class="g">class</b><b class="p">=</b><b class="y">"product_img_box"</b><b class="w">&gt;</b></div>
<div class="ig" style="left:34.10px;top:289px"></div>
<div class="ig" style="left:64.90px;top:289px"></div>
<div class="ig" style="left:95.70px;top:289px"></div>
<div class="cl" style="top:290px"><b class="w">                &lt;</b><b class="p">img</b> <b class="g">id</b><b class="p">=</b><b class="y">"product_img"</b> <b class="g">src</b><b class="p">=</b><b class="y">"</b><i class="c">{{{</i><i class="o">XprImage</i><b class="w"> . </b><i class="o">width</i><b class="w">='1500' </b><i class="o">height</i><b class="w">='999'</b><i class="c">}}}</i><b class="y">"</b> <b class="g">alt</b><b class="p">=</b><b class="y">"</b><i class="c">{{</i><i class="o">Name</i><i class="c">}}</i><b class="y">"</b><b class="w"> /&gt;</b></div>
<div class="ig" style="left:34.10px;top:306px"></div>
<div class="ig" style="left:64.90px;top:306px"></div>
<div class="ig" style="left:95.70px;top:306px"></div>
<div class="cl" style="top:307px"><b class="w">                &lt;</b><b class="p">a</b> <b class="g">href</b><b class="p">=</b><b class="y">"#"</b> <b class="g">class</b><b class="p">=</b><b class="y">"product_img_zoom"</b> <b class="g">title</b><b class="p">=</b><b class="y">"Zoom"</b><b class="w">&gt;</b></div>
<div class="ig" style="left:34.10px;top:323px"></div>
<div class="ig" style="left:64.90px;top:323px"></div>
<div class="ig" style="left:95.70px;top:323px"></div>
<div class="ig" style="left:126.50px;top:323px"></div>
<div class="cl" style="top:324px"><b class="w">                    &lt;</b><b class="p">span</b> <b class="g">class</b><b class="p">=</b><b class="y">"linearicons-zoom-in"</b><b class="w">&gt;&lt;/</b><b class="p">span</b><b class="w">&gt;</b></div>
<div class="ig" style="left:34.10px;top:340px"></div>
<div class="ig" style="left:64.90px;top:340px"></div>
<div class="ig" style="left:95.70px;top:340px"></div>
<div class="cl" style="top:341px"><b class="w">                &lt;/</b><b class="p">a</b><b class="w">&gt;</b></div>
<div class="ig" style="left:34.10px;top:357px"></div>
<div class="ig" style="left:64.90px;top:357px"></div>
<div class="cl" style="top:358px"><b class="w">            &lt;/</b><b class="p">div</b><b class="w">&gt;</b></div>
<div class="ig" style="left:34.10px;top:374px"></div>
<div class="ig" style="left:64.90px;top:374px"></div>
<div class="cl" style="top:375px">            <i class="c">{{/</i><i class="o">_embedded</i><b class="w">.</b><i class="o">Images</i><b class="w">.0</b><i class="c">}}</i></div>
<div class="ig" style="left:34.10px;top:391px"></div>
<div class="cl" style="top:392px">        <i class="c">{{</i><i class="o">else</i><i class="c">}}</i></div>
<div class="ig" style="left:34.10px;top:408px"></div>
<div class="ig" style="left:64.90px;top:408px"></div>
<div class="cl" style="top:409px"><b class="w">            &lt;</b><b class="p">div</b> <b class="g">id</b><b class="p">=</b><b class="y">"pr_item_gallery"</b> <b class="g">class</b><b class="p">=</b><b class="y">"product_gallery_item slick_slider"</b> <b class="g">data-vertical</b><b class="p">=</b><b class="y">"true"</b> <b class="g">data-vertical-swiping</b><b class="p">=</b><b class="y">"true"</b> <b class="g">data-slides-to-show</b><b class="p">=</b><b class="y">"4"</b> <b class="g">data-slides-to-scroll</b><b class="p">=</b><b class="y">"1"</b> <b class="g">data-infinite</b><b class="p">=</b><b class="y">"false"</b><b class="w">&gt;</b></div>
<div class="ig" style="left:34.10px;top:425px"></div>
<div class="ig" style="left:64.90px;top:425px"></div>
<div class="ig" style="left:95.70px;top:425px"></div>
<div class="cl" style="top:426px">                <i class="c">{{#</i><i class="o">_embedded</i><b class="w">.</b><i class="o">Product</i><b class="w">.</b><i class="o">_embedded</i><b class="w">.</b><i class="o">ProductImages</i><i class="c">}}</i></div>
<div class="ig" style="left:34.10px;top:442px"></div>
<div class="ig" style="left:64.90px;top:442px"></div>
<div class="ig" style="left:95.70px;top:442px"></div>
<div class="ig" style="left:126.50px;top:442px"></div>
<div class="cl" style="top:443px"><b class="w">                    &lt;</b><b class="p">div</b> <b class="g">class</b><b class="p">=</b><b class="y">"item"</b><b class="w">&gt;</b></div>
<div class="ig" style="left:34.10px;top:459px"></div>
<div class="ig" style="left:64.90px;top:459px"></div>
<div class="ig" style="left:95.70px;top:459px"></div>
<div class="ig" style="left:126.50px;top:459px"></div>
<div class="ig" style="left:157.30px;top:459px"></div>
<div class="cl" style="top:460px"><b class="w">                        &lt;</b><b class="p">a</b> <b class="g">href</b><b class="p">=</b><b class="y">"#"</b> <b class="g">class</b><b class="p">=</b><b class="y">"product_gallery_item </b><i class="c">{{#</i><i class="o">if</i><b class="w"> @</b><i class="o">first</i><i class="c">}}</i><b class="y">active</b><i class="c">{{/</i><i class="o">if</i><i class="c">}}</i><b class="y">"</b> <b class="g">data-image</b><b class="p">=</b><b class="y">"</b><i class="c">{{{</i><i class="o">XprImage</i> <i class="o">_embedded</i><b class="w">.</b><i class="o">File</i><i class="c">}}}</i><b class="y">"</b> <b class="g">data-zoom-image</b><b class="p">=</b><b class="y">"</b><i class="c">{{{</i><i class="o">XprImage</i> <i class="o">_embedded</i><b class="w">.</b><i class="o">File</i><i class="c">}}}</i><b class="y">"</b><b class="w">&gt;</b></div>
<div class="ig" style="left:34.10px;top:476px"></div>
<div class="ig" style="left:64.90px;top:476px"></div>
<div class="ig" style="left:95.70px;top:476px"></div>
<div class="ig" style="left:126.50px;top:476px"></div>
<div class="ig" style="left:157.30px;top:476px"></div>
<div class="ig" style="left:188.10px;top:476px"></div>
<div class="cl" style="top:477px"><b class="w">                            &lt;</b><b class="p">img</b> <b class="g">src</b><b class="p">=</b><b class="y">"</b><i class="c">{{{</i><i class="o">XprImage</i> <i class="o">_embedded</i><b class="w">.</b><i class="o">File</i> <i class="o">width</i><b class="w">='500' </b><i class="o">height</i><b class="w">='999'</b><i class="c">}}}</i><b class="y">"</b> <b class="g">alt</b><b class="p">=</b><b class="y">"</b><i class="c">{{</i><i class="o">_embedded</i><b class="w">.</b><i class="o">File</i><b class="w">.</b><i class="o">Name</i><i class="c">}}</i><b class="y">"</b><b class="w"> /&gt;</b></div>
<div class="ig" style="left:34.10px;top:493px"></div>
<div class="ig" style="left:64.90px;top:493px"></div>
<div class="ig" style="left:95.70px;top:493px"></div>
<div class="ig" style="left:126.50px;top:493px"></div>
<div class="ig" style="left:157.30px;top:493px"></div>
<div class="cl" style="top:494px"><b class="w">                        &lt;/</b><b class="p">a</b><b class="w">&gt;</b></div>
<div class="ig" style="left:34.10px;top:510px"></div>
<div class="ig" style="left:64.90px;top:510px"></div>
<div class="ig" style="left:95.70px;top:510px"></div>
<div class="ig" style="left:126.50px;top:510px"></div>
<div class="cl" style="top:511px"><b class="w">                    &lt;/</b><b class="p">div</b><b class="w">&gt;</b></div>
<div class="ig" style="left:34.10px;top:527px"></div>
<div class="ig" style="left:64.90px;top:527px"></div>
<div class="ig" style="left:95.70px;top:527px"></div>
<div class="cl" style="top:528px">                <i class="c">{{/</i><i class="o">_embedded</i><b class="w">.</b><i class="o">Product</i><b class="w">.</b><i class="o">_embedded</i><b class="w">.</b><i class="o">ProductImages</i><i class="c">}}</i></div>
<div class="ig" style="left:34.10px;top:544px"></div>
<div class="ig" style="left:64.90px;top:544px"></div>
<div class="cl" style="top:545px"><b class="w">            &lt;/</b><b class="p">div</b><b class="w">&gt;</b></div>
<div class="ig" style="left:34.10px;top:561px"></div>
<div class="ig" style="left:64.90px;top:561px"></div>
<div class="cl" style="top:562px">            <i class="c">{{#</i><i class="o">_embedded</i><b class="w">.</b><i class="o">Product</i><b class="w">.</b><i class="o">_embedded</i><b class="w">.</b><i class="o">ProductImages</i><b class="w">.0</b><i class="c">}}</i></div>
<div class="ig" style="left:34.10px;top:578px"></div>
<div class="ig" style="left:64.90px;top:578px"></div>
<div class="cl" style="top:579px"><b class="w">            &lt;</b><b class="p">div</b> <b class="g">class</b><b class="p">=</b><b class="y">"product_img_box"</b><b class="w">&gt;</b></div>
<div class="ig" style="left:34.10px;top:595px"></div>
<div class="ig" style="left:64.90px;top:595px"></div>
<div class="ig" style="left:95.70px;top:595px"></div>
<div class="cl" style="top:596px"><b class="w">                &lt;</b><b class="p">img</b> <b class="g">id</b><b class="p">=</b><b class="y">"product_img"</b> <b class="g">src</b><b class="p">=</b><b class="y">"</b><i class="c">{{{</i><i class="o">XprImage</i> <i class="o">_embedded</i><b class="w">.</b><i class="o">File</i> <i class="o">width</i><b class="w">='1500' </b><i class="o">height</i><b class="w">='999'</b><i class="c">}}}</i><b class="y">"</b> <b class="g">alt</b><b class="p">=</b><b class="y">"</b><i class="c">{{</i><i class="o">_embedded</i><b class="w">.</b><i class="o">File</i><b class="w">.</b><i class="o">Name</i><i class="c">}}</i><b class="y">"</b><b class="w"> /&gt;</b></div>
<div class="ig" style="left:34.10px;top:612px"></div>
<div class="ig" style="left:64.90px;top:612px"></div>
<div class="ig" style="left:95.70px;top:612px"></div>
<div class="cl" style="top:613px"><b class="w">                &lt;</b><b class="p">a</b> <b class="g">href</b><b class="p">=</b><b class="y">"#"</b> <b class="g">class</b><b class="p">=</b><b class="y">"product_img_zoom"</b> <b class="g">title</b><b class="p">=</b><b class="y">"Zoom"</b><b class="w">&gt;</b></div>
<div class="ig" style="left:34.10px;top:629px"></div>
<div class="ig" style="left:64.90px;top:629px"></div>
<div class="ig" style="left:95.70px;top:629px"></div>
<div class="ig" style="left:126.50px;top:629px"></div>
<div class="cl" style="top:630px"><b class="w">                    &lt;</b><b class="p">span</b> <b class="g">class</b><b class="p">=</b><b class="y">"linearicons-zoom-in"</b><b class="w">&gt;&lt;/</b><b class="p">span</b><b class="w">&gt;</b></div>
<div class="ig" style="left:34.10px;top:646px"></div>
<div class="ig" style="left:64.90px;top:646px"></div>
<div class="ig" style="left:95.70px;top:646px"></div>
<div class="cl" style="top:647px"><b class="w">                &lt;/</b><b class="p">a</b><b class="w">&gt;</b></div>
<div class="ig" style="left:34.10px;top:663px"></div>
<div class="ig" style="left:64.90px;top:663px"></div>
<div class="cl" style="top:664px"><b class="w">            &lt;/</b><b class="p">div</b><b class="w">&gt;</b></div>
<div class="ig" style="left:34.10px;top:680px"></div>
<div class="ig" style="left:64.90px;top:680px"></div>
<div class="cl" style="top:681px">            <i class="c">{{/</i><i class="o">_embedded</i><b class="w">.</b><i class="o">Product</i><b class="w">.</b><i class="o">_embedded</i><b class="w">.</b><i class="o">ProductImages</i><b class="w">.0</b><i class="c">}}</i></div>
<div class="ig" style="left:34.10px;top:697px"></div>
<div class="cl" style="top:698px">        <i class="c">{{/</i><i class="o">if</i><i class="c">}}</i></div>
<div class="cl" style="top:715px"><b class="w">    &lt;/</b><b class="p">div</b><b class="w">&gt;</b></div>
<div class="cl" style="top:732px">    <i class="c">{{/</i><i class="o">XprLogic</i><i class="c">}}</i></div>
<div class="cl" style="top:749px">    <i class="c">{{#</i><i class="o">XprLogic</i><b class="w"> @</b><i class="o">root</i><b class="w">.</b><i class="o">isShopQuickView</i><b class="w"> '</b><i class="o">true</i><b class="w">' </b><i class="o">logic</i><b class="w">="</b><i class="o">eq</i><b class="w">"</b><i class="c">}}</i></div>
<div class="cl" style="top:766px">    <b class="m">{{!-- quick view --}}</b></div>
<div class="cl" style="top:783px"><b class="w">    &lt;</b><b class="p">div</b> <b class="g">class</b><b class="p">=</b><b class="y">"product-image"</b><b class="w">&gt;</b></div>
<div class="ig" style="left:34.10px;top:799px"></div>
<div class="cl" style="top:800px">        <i class="c">{{#</i><i class="o">if</i> <i class="o">_embedded</i><b class="w">.</b><i class="o">Images</i><b class="w">.0</b><i class="c">}}</i></div>
<div class="a" style="left:4.00px;top:0.00px;width:2.00px;height:17.00px;background:#5c5c5c"></div>
</div>
<div class="a" style="left:1150.00px;top:0.00px;width:17.00px;height:798.00px;background:#f1f1f1"></div>
<div class="a" style="left:1152.00px;top:17.00px;width:13.00px;height:181.00px;background:#c1c1c1"></div>
<div class="tri" style="left:1154px;top:6px;border-top:0;border-bottom:5px solid #a3a3a3"></div>
<div class="tri" style="left:1154px;top:786px;border-top:5px solid #505050"></div>
<div class="a" style="left:35.00px;top:798.00px;width:1115.00px;height:17.00px;background:#f1f1f1"></div>
<div class="a" style="left:52.00px;top:800.00px;width:1073.00px;height:13.00px;background:#c1c1c1"></div>
<div class="a" style="left:40px;top:802px;width:0;height:0;border-top:4.5px solid transparent;border-bottom:4.5px solid transparent;border-right:5px solid #a3a3a3"></div>
<div class="a" style="left:1140px;top:802px;width:0;height:0;border-top:4.5px solid transparent;border-bottom:4.5px solid transparent;border-left:5px solid #505050"></div>
<div class="a" style="left:1150.00px;top:798.00px;width:17.00px;height:17.00px;background:#272822"></div>
</div>
<div class="a" style="left:461.00px;top:910.00px;width:1167.00px;height:37.00px;background:#f1f1f1"></div>
<div class="a" style="left:461.60px;top:911.00px;width:106.40px;height:36.00px;background:#fff"></div>
<div class="a" style="left:461.60px;top:911.00px;width:106.40px;height:3.00px;background:#4a80e6;border-radius:2px 2px 0 0"></div>
<div class="a" style="left:568.00px;top:911.00px;width:46.00px;height:36.00px;background:#fff;border-left:1px solid #e2e2e2;border-right:1px solid #e2e2e2"></div>
<div class="t" style="left:470.60px;top:920px;font-size:12.00px;line-height:20px;color:#555">Element Preview</div>
<div class="t" style="left:577.20px;top:920px;font-size:11.90px;line-height:20px;color:#5a9ee6">Trace</div>
<svg class="a" style="left:1606px;top:923px" width="17" height="11" viewBox="0 0 17 11"><path d="M2 9L8.5 2.6L15 9" fill="none" stroke="#1e1e2a" stroke-width="1.8"/></svg>
<div class="a" style="left:221.00px;top:945.00px;width:1674.00px;height:2.00px;background:#dadada"></div>
<div class="a" style="left:1628.00px;top:49.00px;width:267.00px;height:898.00px;background:#fff"></div>
<div class="a" style="left:1628.00px;top:49.00px;width:1.00px;height:898.00px;background:#e2e2e2"></div>
<div class="t" style="left:1640.00px;top:62px;font-size:20.40px;line-height:20px;color:#4a4a52">ProductVariantElement</div>
<div class="a" style="left:1629.00px;top:94.30px;width:256.00px;height:1.00px;background:#eceef1"></div>
<div class="a" style="left:1629.00px;top:184.00px;width:256.00px;height:1.00px;background:#eceef1"></div>
<div class="a" style="left:1629.00px;top:272.20px;width:256.00px;height:1.00px;background:#eceef1"></div>
<div class="a" style="left:1629.00px;top:642.20px;width:256.00px;height:1.00px;background:#eceef1"></div>
<div class="a" style="left:1629.00px;top:775.20px;width:256.00px;height:1.00px;background:#eceef1"></div>
<div class="a" style="left:1629.00px;top:732.00px;width:256.00px;height:1.00px;background:#dfe2e7"></div>
<div class="t" style="left:1645.00px;top:113px;font-size:13.60px;line-height:20px;color:#2e2e3c">Category</div>
<div class="a" style="left:1644.50px;top:135.30px;width:235.00px;height:33.00px;border:1px solid #ccd1da;border-radius:5px;background:#fff"></div><div class="tri" style="left:1862.0px;top:149.3px"></div>
<div class="t" style="left:1645.00px;top:202px;font-size:13.70px;line-height:20px;color:#2e2e3c">Available as Template</div>
<div class="a" style="left:1785.50px;top:201.00px;width:13.00px;height:13.00px;background:#dedede;border-radius:50%;color:#fff;font-size:10px;font-weight:bold;line-height:13px;text-align:center">?</div>
<div class="a" style="left:1649.00px;top:234.00px;width:18.00px;height:18.00px;border:1px solid #d2d2d2"></div>
<div class="t" style="left:1645.00px;top:289px;font-size:13.80px;line-height:20px;color:#2e2e3c">Available as Playlist Skin</div>
<div class="a" style="left:1805.50px;top:289.50px;width:13.00px;height:13.00px;background:#dedede;border-radius:50%;color:#fff;font-size:10px;font-weight:bold;line-height:13px;text-align:center">?</div>
<div class="a" style="left:1649.00px;top:321.40px;width:18.00px;height:18.00px;border:1px solid #d2d2d2"></div>
<div class="t" style="left:1645.00px;top:355px;font-size:13.90px;line-height:20px;color:#2e2e3c">Custom Fields Profile</div>
<div class="a" style="left:1785.50px;top:354.50px;width:13.00px;height:13.00px;background:#dedede;border-radius:50%;color:#fff;font-size:10px;font-weight:bold;line-height:13px;text-align:center">?</div>
<div class="a" style="left:1644.50px;top:379.20px;width:235.00px;height:33.00px;border:1px solid #ccd1da;border-radius:5px;background:#fff"></div><div class="tri" style="left:1862.0px;top:393.2px"></div><div class="t" style="left:1658.30px;top:387px;font-size:13.80px;line-height:20px;color:#9a9aa0">Select Options</div>
<div class="t" style="left:1645.00px;top:420px;font-size:13.80px;line-height:20px;color:#2e2e3c">Playlist Preview Image</div>
<div class="a" style="left:1644.50px;top:443.30px;width:225.00px;height:183.00px;border:1px solid #c9d0d6;border-radius:5px"></div>
<svg class="a" style="left:1730px;top:515px" width="54" height="43" viewBox="0 0 54 43"><rect x="2" y="2" width="50" height="39" rx="3" fill="none" stroke="#bfc8cf" stroke-width="4"/><circle cx="12.5" cy="12" r="5.5" fill="#bfc8cf"/><path d="M7 37.5V32L16 23L20 27L34 13L47.5 26.5V37.5Z" fill="#bfc8cf"/></svg>
<div class="a" style="left:1829.40px;top:598.00px;width:40.00px;height:28.20px;border-top:1px solid #c9d0d6;border-left:1px solid #c9d0d6;border-radius:5px 0 5px 0"></div>
<div class="a" style="left:1841.80px;top:611.50px;width:3.40px;height:3.40px;background:#3f6fe2;border-radius:50%"></div>
<div class="a" style="left:1847.10px;top:611.50px;width:3.40px;height:3.40px;background:#3f6fe2;border-radius:50%"></div>
<div class="a" style="left:1852.40px;top:611.50px;width:3.40px;height:3.40px;background:#3f6fe2;border-radius:50%"></div>
<div class="t" style="left:1645.00px;top:660px;font-size:13.75px;line-height:20px;color:#2e2e3c">Time to live</div>
<div class="a" style="left:1722.50px;top:659.00px;width:13.00px;height:13.00px;background:#dedede;border-radius:50%;color:#fff;font-size:10px;font-weight:bold;line-height:13px;text-align:center">?</div>
<div class="a" style="left:1644.50px;top:683.20px;width:235.00px;height:33.00px;border:1px solid #ccd1da;border-radius:5px;background:#fff"></div>
<div class="t" style="left:1640.00px;top:745px;font-size:13.90px;line-height:20px;color:#3c3c46">Datasource Bindings</div>
<div class="t" style="left:1645.00px;top:792px;font-size:13.80px;line-height:20px;color:#2e2e3c">Bundles</div>
<div class="a" style="left:1644.50px;top:816.20px;width:235.00px;height:33.00px;border:1px solid #ccd1da;border-radius:5px;background:#fff"></div><div class="tri" style="left:1862.0px;top:830.2px"></div><div class="t" style="left:1658.30px;top:824px;font-size:13.80px;line-height:20px;color:#4a4a52">Product Detail</div>
<div class="t" style="left:1645.00px;top:862px;font-size:13.80px;line-height:20px;color:#2e2e3c">Available Sources</div>
<div class="a" style="left:1644.50px;top:885.30px;width:235.00px;height:33.00px;border:1px solid #ccd1da;border-radius:5px;background:#fff"></div><div class="tri" style="left:1862.0px;top:899.3px"></div>
<div class="a" style="left:1644.50px;top:924.40px;width:235.00px;height:40.00px;border:1.5px solid #4a78e6;border-radius:20px"></div>
<div class="t" style="left:1713.00px;top:934px;font-size:13.80px;line-height:20px;color:#4a78e6">Bind to Element</div>
<div class="a" style="left:1885.00px;top:49.00px;width:10.00px;height:898.00px;background:#f1f1f1"></div>
<div class="a" style="left:1886.00px;top:65.00px;width:8.00px;height:366.00px;background:#c1c1c1"></div>
<div class="tri" style="left:1886px;top:53px;border-left-width:4px;border-right-width:4px;border-top:0;border-bottom:4px solid #777"></div>
<div class="tri" style="left:1886px;top:938px;border-left-width:4px;border-right-width:4px;border-top:4px solid #333"></div>
</body></html>
